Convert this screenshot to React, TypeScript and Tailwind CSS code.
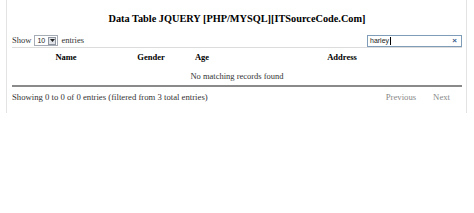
const columns = [
  { label: 'Name', width: 'w-[108px]' },
  { label: 'Gender', width: 'w-[62px]' },
  { label: 'Age', width: 'w-[40px]' },
  { label: 'Address', width: 'flex-1' },
];

function LengthSelect() {
  return (
    <span className="mx-[3px] inline-flex h-[11px] w-[24px] items-center border border-[#a5acb5] bg-white">
      <span className="flex-1 pl-[2px] font-['Liberation_Sans',sans-serif] text-[7px] leading-none text-[#222]">10</span>
      <span className="mr-[1px] flex h-[8px] w-[8px] items-center justify-center border border-[#8e959e] bg-[#dfe3e8]">
        <svg width="5" height="3" viewBox="0 0 5 3">
          <path d="M0 0h5L2.5 3z" fill="#222" />
        </svg>
      </span>
    </span>
  );
}

function SearchBox() {
  return (
    <div className="flex h-[12px] w-[95px] items-center border border-[#7f9db9] bg-white pl-[2px] pr-[4px]">
      <span className="font-['Liberation_Sans',sans-serif] text-[7px] leading-none text-[#222]">harley</span>
      <span className="ml-[1px] h-[8px] w-px bg-black" />
      <span className="ml-auto font-['Liberation_Sans',sans-serif] text-[8px] font-bold leading-none text-[#3a5a8a]">×</span>
    </div>
  );
}

export default function App() {
  return (
    <div className="h-[213px] w-[474px] bg-white font-['Liberation_Serif',serif] text-[#333]">
      <div className="ml-[6px] flex h-[113px] w-[461px] flex-col border-x border-[#e3e3e3] pl-[5px] pr-[4px]">
        <div className="h-[32px] pt-[13px] text-center text-[10.3px] font-bold leading-[12px] text-black">
          Data Table JQUERY [PHP/MYSQL][ITSourceCode.Com]
        </div>

        <div className="flex h-[16px] items-center justify-between border-b border-[#dcdcdc] pt-[2px] text-[8.5px]">
          <label className="flex items-center">
            Show
            <LengthSelect />
            entries
          </label>
          <SearchBox />
        </div>

        <div className="flex h-[19px] items-center text-[8.5px] font-bold text-black">
          {columns.map((c) => (
            <div key={c.label} className={`${c.width} text-center`}>
              {c.label}
            </div>
          ))}
        </div>

        <div className="flex h-[20px] items-center justify-center border-b-2 border-[#8a8a8a] text-[8.5px]">
          No matching records found
        </div>

        <div className="flex h-[22px] items-center justify-between text-[8.7px]">
          <span>Showing 0 to 0 of 0 entries (filtered from 3 total entries)</span>
          <div className="flex gap-[17px] pr-[12px] text-[#888]">
            <span>Previous</span>
            <span>Next</span>
          </div>
        </div>
      </div>
    </div>
  );
}
